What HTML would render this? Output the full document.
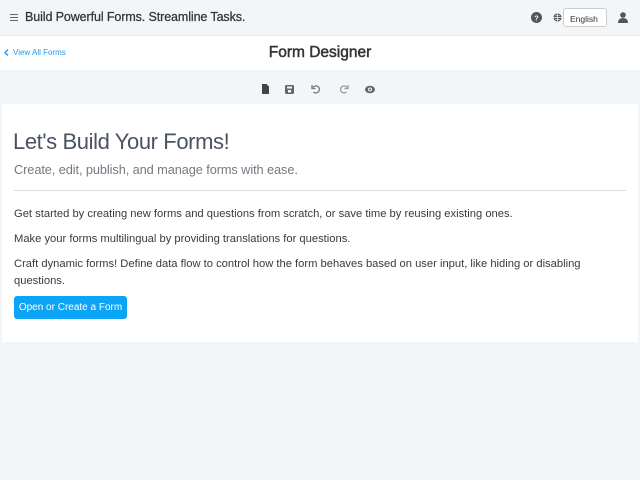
<!DOCTYPE html>
<html><head><meta charset="utf-8"><style>
*{margin:0;padding:0;box-sizing:border-box}
body{width:640px;height:480px;background:#f3f6f9;font-family:"Liberation Sans",sans-serif;color:#333;position:relative;overflow:hidden}
.a{position:absolute}
</style></head><body>
<div class="a" style="left:0;top:0;width:640px;height:36px;background:#f3f6f9;border-bottom:1px solid #e6e9ec"></div>
<div class="a" style="left:10px;top:14px;width:8px;height:1px;background:#666;box-shadow:0 3px 0 #666,0 6px 0 #666"></div>
<div class="a" style="left:25px;top:10px;font-size:12.5px;color:#333;letter-spacing:-0.1px;-webkit-text-stroke:0.25px #333">Build Powerful Forms. Streamline Tasks.</div>
<svg class="a" style="left:531px;top:12px" width="11" height="11" viewBox="0 0 12 12"><circle cx="6" cy="6" r="6" fill="#555"/><text x="6" y="9" font-size="8" font-weight="bold" fill="#fff" text-anchor="middle" font-family="Liberation Sans">?</text></svg>
<svg class="a" style="left:553px;top:13px" width="9" height="9" viewBox="0 0 10 10"><circle cx="5" cy="5" r="4.5" fill="#555"/><path d="M0.5 5H9.5M5 0.5V9.5M2.5 2.5Q5 4 7.5 2.5M2.5 7.5Q5 6 7.5 7.5" stroke="#f3f6f9" stroke-width="0.8" fill="none"/></svg>
<div class="a" style="left:563px;top:8px;width:44px;height:19px;background:#fff;border:1px solid #ccc;border-radius:3px;font-size:8.5px;color:#333;padding:5px 0 0 6px">English</div>
<svg class="a" style="left:618px;top:12px" width="10" height="11" viewBox="0 0 10 11"><circle cx="5" cy="3" r="2.8" fill="#555"/><path d="M0 11Q0 6 5 6Q10 6 10 11Z" fill="#555"/></svg>
<div class="a" style="left:0;top:36px;width:640px;height:34px;background:#fff"></div>
<svg class="a" style="left:4px;top:49px" width="5" height="7" viewBox="0 0 5 7"><path d="M4 0.5L1 3.5L4 6.5" stroke="#1e9af0" stroke-width="1.4" fill="none"/></svg>
<div class="a" style="left:13px;top:48px;font-size:8px;color:#1e9af0">View All Forms</div>
<div class="a" style="left:0;top:44px;width:640px;text-align:center;font-size:15.5px;font-weight:normal;-webkit-text-stroke:0.5px #333;color:#333">Form Designer</div>
<svg class="a" style="left:261px;top:84px" width="120" height="11" viewBox="0 0 120 11">
<path d="M1 0H5.5L8 2.5V10H1Z" fill="#444"/>
<rect x="24" y="1" width="9" height="9" rx="1.5" fill="#666"/><rect x="26" y="2.5" width="5" height="2" fill="#f3f6f9"/><rect x="27" y="6" width="3" height="2.5" fill="#f3f6f9"/>
<path d="M52 3.5A3.5 3.5 0 1 1 52.5 8" stroke="#777" stroke-width="1.3" fill="none"/><path d="M51 1V4.5H54.5" stroke="#777" stroke-width="1.3" fill="none"/>
<path d="M86 3.5A3.5 3.5 0 1 0 85.5 8" stroke="#999" stroke-width="1.3" fill="none"/><path d="M87 1V4.5H83.5" stroke="#999" stroke-width="1.3" fill="none"/>
<ellipse cx="109" cy="5.5" rx="5" ry="3.8" fill="#666"/><circle cx="109" cy="5.5" r="2" fill="#f3f6f9"/><circle cx="109" cy="5.5" r="1" fill="#666"/>
</svg>
<div class="a" style="left:2px;top:104px;width:636px;height:238px;background:#fff"></div>
<div class="a" style="left:13px;top:129px;font-size:22px;font-weight:300;color:#4a5361;letter-spacing:-0.4px">Let's Build Your Forms!</div>
<div class="a" style="left:14px;top:162px;font-size:12.8px;color:#737a82;letter-spacing:-0.1px">Create, edit, publish, and manage forms with ease.</div>
<div class="a" style="left:14px;top:190px;width:612px;height:1px;background:#ddd"></div>
<div class="a" style="left:14px;top:206px;font-size:11.2px;color:#3a3a3a;line-height:17px;width:620px">Get started by creating new forms and questions from scratch, or save time by reusing existing ones.</div>
<div class="a" style="left:14px;top:231px;font-size:11.2px;color:#3a3a3a;line-height:17px">Make your forms multilingual by providing translations for questions.</div>
<div class="a" style="left:14px;top:256px;font-size:11.2px;color:#3a3a3a;line-height:17px;width:620px">Craft dynamic forms! Define data flow to control how the form behaves based on user input, like hiding or disabling questions.</div>
<div class="a" style="left:14px;top:296px;width:113px;height:23px;background:#0ca4f5;border-radius:3px;color:#fff;font-size:10px;text-align:center;line-height:23px">Open or Create a Form</div>
</body></html>
